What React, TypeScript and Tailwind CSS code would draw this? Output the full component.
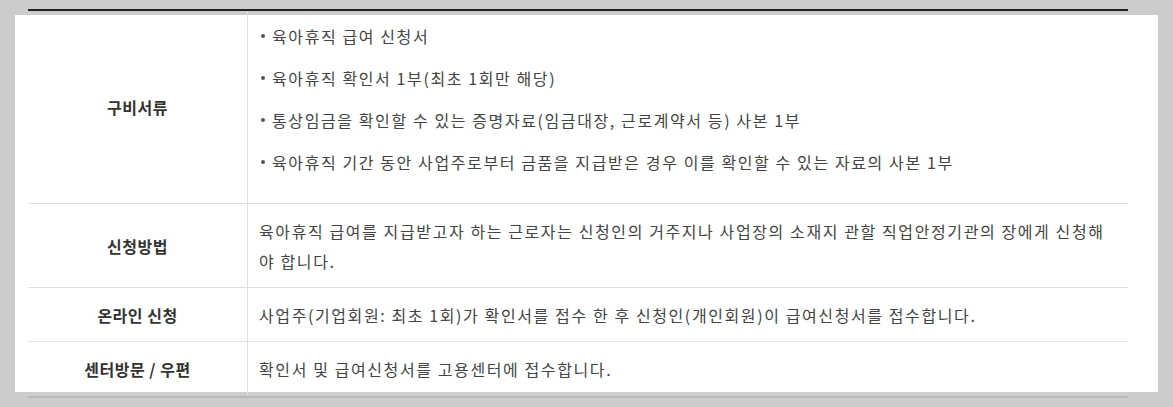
export default function App() {
  const docs = [
    '육아휴직 급여 신청서',
    '육아휴직 확인서 1부(최초 1회만 해당)',
    '통상임금을 확인할 수 있는 증명자료(임금대장, 근로계약서 등) 사본 1부',
    '육아휴직 기간 동안 사업주로부터 금품을 지급받은 경우 이를 확인할 수 있는 자료의 사본 1부',
  ]

  return (
    <div className="w-[1173px] h-[407px] overflow-hidden bg-[#cccccc] pl-[15px] pt-[15px] font-['Noto_Sans_CJK_KR',sans-serif]">
      <div className="w-[1143px] h-[377px] bg-white pl-[13px] flex flex-col items-start">
        {/* info table */}
        <div className="-mt-[6px] w-[1100px] shrink-0 border-t-2 border-b-2 border-t-[#222222] border-b-[#b8b8b8] text-[16px] text-[#444444] tracking-[1.6px]">
          {/* 구비서류 */}
          <div className="flex h-[193px] border-b border-[#e0e0e0]">
            <div className="w-[220px] shrink-0 border-r border-[#e0e0e0] flex items-center justify-center font-bold text-[#333333] tracking-[0.5px]">
              구비서류
            </div>
            <ul className="pt-[4px] pl-[13px]">
              {docs.map((d) => (
                <li key={d} className="flex items-center h-[42px]">
                  <span className="w-[4px] h-[4px] rounded-full bg-[#555555] mr-[7px]" />
                  {d}
                </li>
              ))}
            </ul>
          </div>

          {/* 신청방법 */}
          <div className="flex h-[84px] border-b border-[#e0e0e0]">
            <div className="w-[220px] shrink-0 border-r border-[#e0e0e0] flex items-center justify-center font-bold text-[#333333] tracking-[0.5px]">
              신청방법
            </div>
            <div className="flex-1 flex items-center pl-[11px] pr-[11px] leading-[30px]">
              육아휴직 급여를 지급받고자 하는 근로자는 신청인의 거주지나 사업장의 소재지 관할 직업안정기관의 장에게 신청해야 합니다.
            </div>
          </div>

          {/* 온라인 신청 */}
          <div className="flex h-[54px] border-b border-[#e0e0e0]">
            <div className="w-[220px] shrink-0 border-r border-[#e0e0e0] flex items-center justify-center font-bold text-[#333333] tracking-[0.5px]">
              온라인 신청
            </div>
            <div className="flex-1 flex items-center pl-[11px]">
              사업주(기업회원: 최초 1회)가 확인서를 접수 한 후 신청인(개인회원)이 급여신청서를 접수합니다.
            </div>
          </div>

          {/* 센터방문 / 우편 */}
          <div className="flex h-[54px]">
            <div className="w-[220px] shrink-0 border-r border-[#e0e0e0] flex items-center justify-center font-bold text-[#333333] tracking-[0.5px]">
              센터방문 / 우편
            </div>
            <div className="flex-1 flex items-center pl-[11px]">
              확인서 및 급여신청서를 고용센터에 접수합니다.
            </div>
          </div>
        </div>
      </div>
    </div>
  )
}
